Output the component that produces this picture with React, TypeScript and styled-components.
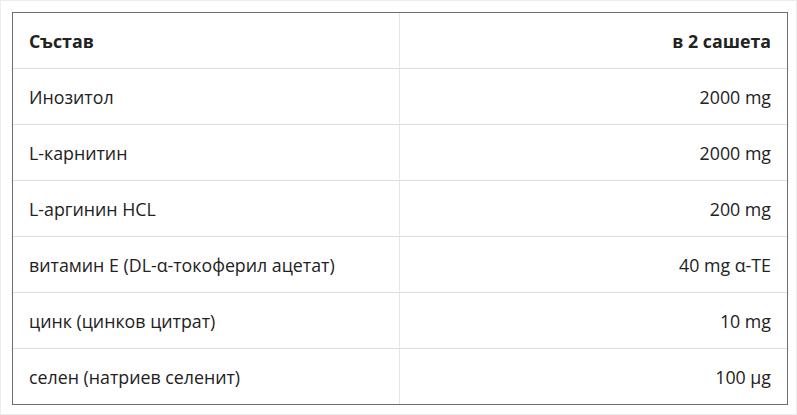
import React from 'react';
import styled, { createGlobalStyle } from 'styled-components';

const GlobalStyle = createGlobalStyle`
  html, body {
    margin: 0;
    background: #fff;
  }
`;

type Row = { name: string; amount: string };

const ROWS: Row[] = [
  { name: 'Инозитол', amount: '2000 mg' },
  { name: 'L-карнитин', amount: '2000 mg' },
  { name: 'L-аргинин HCL', amount: '200 mg' },
  { name: 'витамин E (DL-α-токоферил ацетат)', amount: '40 mg α-TE' },
  { name: 'цинк (цинков цитрат)', amount: '10 mg' },
  { name: 'селен (натриев селенит)', amount: '100 µg' },
];

const Page = styled.div`
  box-sizing: border-box;
  width: 797px;
  height: 415px;
  padding: 11px 9px 10px 11px;
  border: 1px solid #ececec;
  font-family: 'Open Sans', 'Noto Sans', sans-serif;
`;

const Table = styled.div`
  width: 776px;
  box-sizing: border-box;
  display: grid;
  grid-template-columns: 386px 1fr;
  border: 1px solid #6e6e6e;
  color: #222;
  font-size: 17.8px;
`;

const Cell = styled.div<{ $right?: boolean; $head?: boolean }>`
  box-sizing: border-box;
  height: ${(p) => (p.$head ? '55px' : '56px')};
  padding: 0 16px;
  display: flex;
  align-items: center;
  justify-content: ${(p) => (p.$right ? 'flex-end' : 'flex-start')};
  font-weight: ${(p) => (p.$head ? 700 : 400)};
  border-top: ${(p) => (p.$head ? 'none' : '1px solid #dcdcdc')};
  border-left: ${(p) => (p.$right ? '1px solid #e4e4e4' : 'none')};
  white-space: nowrap;
`;

export default function App() {
  return (
    <>
      <GlobalStyle />
      <Page>
        <Table role="table">
          <Cell $head>Състав</Cell>
          <Cell $head $right>в 2 сашета</Cell>
          {ROWS.map((row) => (
            <React.Fragment key={row.name}>
              <Cell>{row.name}</Cell>
              <Cell $right>{row.amount}</Cell>
            </React.Fragment>
          ))}
        </Table>
      </Page>
    </>
  );
}
